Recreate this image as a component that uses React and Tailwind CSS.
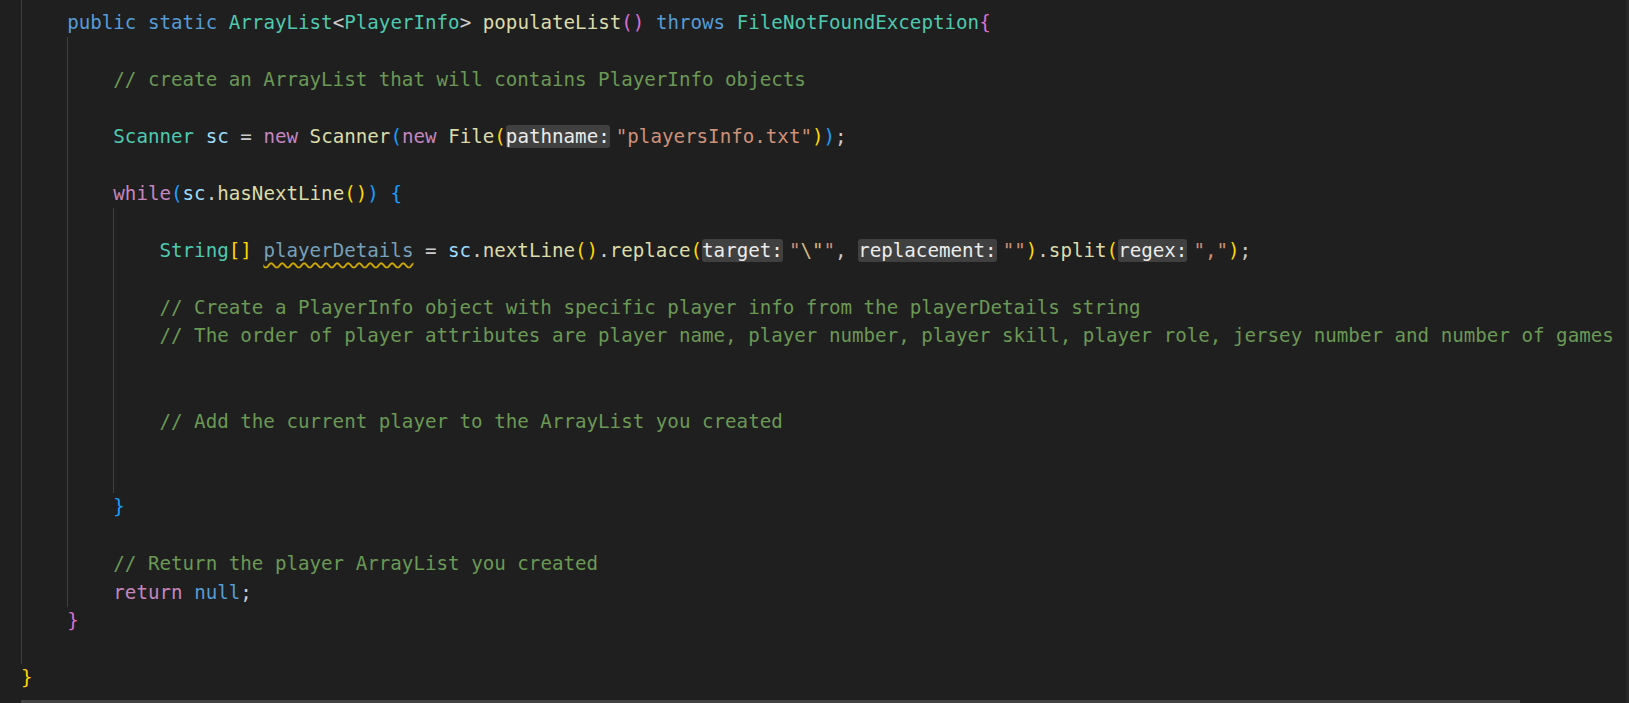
const C = {
  kw: "text-[#569cd6]",
  ty: "text-[#4ec9b0]",
  fn: "text-[#dcdcaa]",
  va: "text-[#9cdcfe]",
  ct: "text-[#c586c0]",
  st: "text-[#ce9178]",
  es: "text-[#d7ba7d]",
  cm: "text-[#6a9955]",
  p: "text-[#cccccc]",
  b1: "text-[#ffd700]",
  b2: "text-[#da70d6]",
  b3: "text-[#179fff]",
  un: "text-[#77a0ba] underline decoration-wavy decoration-[#cca700] decoration-[1.5px] underline-offset-[5px]",
};

const hint = (text) => ({ hint: text });

const lines = [
  {
    g: 1,
    t: [
      ["public", "kw"], [" ", "p"], ["static", "kw"], [" ", "p"], ["ArrayList", "ty"], ["<", "p"],
      ["PlayerInfo", "ty"], [">", "p"], [" ", "p"], ["populateList", "fn"], ["(", "b2"], [")", "b2"],
      [" ", "p"], ["throws", "kw"], [" ", "p"], ["FileNotFoundException", "ty"], ["{", "b2"],
    ],
  },
  { g: 2, t: [] },
  { g: 2, t: [["// create an ArrayList that will contains PlayerInfo objects", "cm"]] },
  { g: 2, t: [] },
  {
    g: 2,
    t: [
      ["Scanner", "ty"], [" ", "p"], ["sc", "va"], [" = ", "p"], ["new", "ct"], [" ", "p"],
      ["Scanner", "fn"], ["(", "b3"], ["new", "ct"], [" ", "p"], ["File", "fn"], ["(", "b1"],
      hint("pathname:"), ['"playersInfo.txt"', "st"], [")", "b1"], [")", "b3"], [";", "p"],
    ],
  },
  { g: 2, t: [] },
  {
    g: 2,
    t: [
      ["while", "ct"], ["(", "b3"], ["sc", "va"], [".", "p"], ["hasNextLine", "fn"], ["(", "b1"],
      [")", "b1"], [")", "b3"], [" ", "p"], ["{", "b3"],
    ],
  },
  { g: 3, t: [] },
  {
    g: 3,
    t: [
      ["String", "ty"], ["[", "b1"], ["]", "b1"], [" ", "p"], ["playerDetails", "un"], [" = ", "p"],
      ["sc", "va"], [".", "p"], ["nextLine", "fn"], ["(", "b1"], [")", "b1"], [".", "p"],
      ["replace", "fn"], ["(", "b1"], hint("target:"), ['"', "st"], ['\\"', "es"], ['"', "st"],
      [", ", "p"], hint("replacement:"), ['""', "st"], [")", "b1"], [".", "p"], ["split", "fn"],
      ["(", "b1"], hint("regex:"), ['","', "st"], [")", "b1"], [";", "p"],
    ],
  },
  { g: 3, t: [] },
  { g: 3, t: [["// Create a PlayerInfo object with specific player info from the playerDetails string", "cm"]] },
  {
    g: 3,
    t: [["// The order of player attributes are player name, player number, player skill, player role, jersey number and number of games", "cm"]],
  },
  { g: 3, t: [] },
  { g: 3, t: [] },
  { g: 3, t: [["// Add the current player to the ArrayList you created", "cm"]] },
  { g: 3, t: [] },
  { g: 3, t: [] },
  { g: 2, t: [["}", "b3"]] },
  { g: 2, t: [] },
  { g: 2, t: [["// Return the player ArrayList you created", "cm"]] },
  { g: 2, t: [["return", "ct"], [" ", "p"], ["null", "kw"], [";", "p"]] },
  { g: 1, t: [["}", "b2"]] },
  { g: 1, t: [] },
  { g: 0, t: [["}", "b1"]] },
];

const Guide = () => <div className="w-[4ch] shrink-0 border-l border-[#404040]" />;

const Line = ({ g, t }) => (
  <div className="flex h-[28.5px]">
    {Array.from({ length: g }, (_, i) => (
      <Guide key={i} />
    ))}
    <div className="whitespace-pre leading-[28.5px]">
      {t.map((tok, i) =>
        tok.hint ? (
          <span
            key={i}
            className="inline-block leading-[23px] mr-[6px] rounded-[3px] bg-[#404040] text-[#ececec]"
          >
            {tok.hint}
          </span>
        ) : (
          <span key={i} className={C[tok[1]]}>
            {tok[0]}
          </span>
        )
      )}
    </div>
  </div>
);

export default function App() {
  return (
    <div className="flex w-[1629px] h-[703px] overflow-hidden bg-[#1f1f1f] font-['DejaVu_Sans_Mono',monospace] text-[19.18px]">
      <div className="flex-1 flex flex-col min-w-0">
        <div className="h-[700px] pl-[21px] overflow-hidden">
          <div className="flex h-[8.5px]">
            <Guide />
          </div>
          {lines.map((l, i) => (
            <Line key={i} {...l} />
          ))}
        </div>
        <div className="h-[3px]">
          <div className="ml-[21px] w-[1499px] h-full bg-[#424242]" />
        </div>
      </div>
      <div className="w-[3px] bg-[#282828]" />
    </div>
  );
}
